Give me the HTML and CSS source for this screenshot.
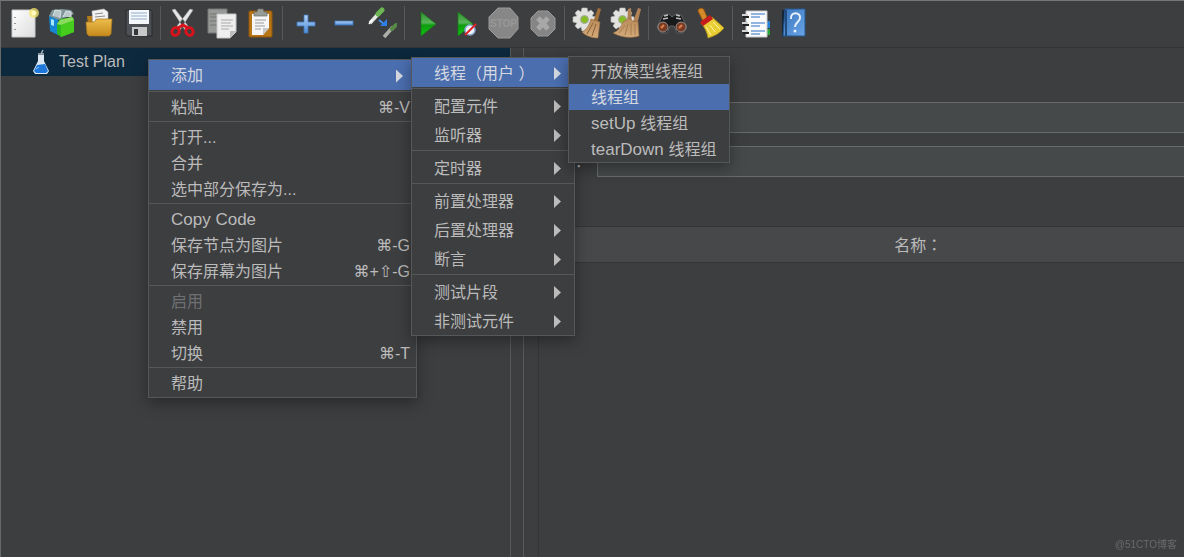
FILE: index.html
```html
<!DOCTYPE html>
<html lang="zh-CN">
<head>
<meta charset="utf-8">
<title>Test Plan</title>
<link rel="stylesheet" href="styles.css">
</head>
<body>
<svg class="defs" aria-hidden="true">
  <defs>
    <linearGradient id="paper" x1="0" y1="0" x2="1" y2="1"><stop offset="0" stop-color="#fff"/><stop offset="1" stop-color="#dcdcdc"/></linearGradient>
    <linearGradient id="gold" x1="0" y1="0" x2="0" y2="1"><stop offset="0" stop-color="#edbd4c"/><stop offset="1" stop-color="#c58a1c"/></linearGradient>
    <linearGradient id="green" x1="0" y1="0" x2="0" y2="1"><stop offset="0" stop-color="#2f8f2f"/><stop offset=".45" stop-color="#58b458"/><stop offset=".55" stop-color="#0d9d0d"/><stop offset="1" stop-color="#12c412"/></linearGradient>
    <linearGradient id="sky" x1="0" y1="0" x2="0" y2="1"><stop offset="0" stop-color="#b5d3f5"/><stop offset="1" stop-color="#4c8bd8"/></linearGradient>
    <linearGradient id="book" x1="0" y1="0" x2="1" y2="1"><stop offset="0" stop-color="#3a76bd"/><stop offset="1" stop-color="#69a4e8"/></linearGradient>
    <linearGradient id="straw" x1="0" y1="0" x2="0" y2="1"><stop offset="0" stop-color="#b98a58"/><stop offset="1" stop-color="#d3ab7c"/></linearGradient>
    <g id="gear">
      <path d="M11 1h5l1 4 3-2 3 3-2 3 4 1v5l-4 1 2 3-3 3-3-2-1 4h-5l-1-4-3 2-3-3 2-3-4-1v-5l4-1-2-3 3-3 3 2z" fill="#e2e2e0" stroke="#b9b9b6" stroke-width=".6"/>
      <circle cx="13.500" cy="12.500" r="4" fill="#86bd25" stroke="#aaa" stroke-width="1"/>
    </g>
  </defs>
</svg>

<div class="window">
  <header class="toolbar" role="toolbar" aria-label="工具栏">
    <button class="tool" aria-label="新建"><svg viewBox="0 0 32 32"><path d="M5 3h21l2 3v24H5z" fill="url(#paper)" stroke="#c9c9c9"/><path d="M8 10v1M8 16v1M8 22v1" stroke="#777" stroke-width="1.500"/><circle cx="27" cy="6" r="5" fill="#f4e76a" opacity=".75"/><circle cx="27" cy="6" r="2.500" fill="#fffbc0"/></svg></button>
    <button class="tool" aria-label="模板"><svg viewBox="0 0 32 32"><path d="M4 9l9 3v16l-8-4z" fill="#1685d4"/><path d="M4 9l3-6 10-1 9 1 3 4-15 6z" fill="#7f9599"/><path d="M8 9l2-6 6 1-1 7M18 10l3-6 5 1v5" fill="#b9c7ca" stroke="#dbe3e4" stroke-width="1"/><path d="M6 12l3 1v6l-3-1z" fill="#a5e8fa"/><path d="M12 17l3-5 13-2 1 3v12l-13 5-4-3z" fill="#2eb820"/><path d="M16 18l13-5v12l-13 5z" fill="#45cc1c"/><path d="M12 17l4 1 13-5-2-3-12 3z" fill="#8bdc5c"/></svg></button>
    <button class="tool" aria-label="打开"><svg viewBox="0 0 32 32"><path d="M4 9h7l2 3h14v14H6z" fill="#b17a1a"/><path d="M9 4l12-2 4 3v13H10z" fill="#f3f3f3" stroke="#bbb" stroke-width=".6"/><path d="M12 7l8-1M12 10l10-1M12 13h10" stroke="#8b8b8b"/><path d="M3 15h8l3-3h15l-1 15-2 2H6l-2-2z" fill="url(#gold)" stroke="#a8751b" stroke-width=".7"/></svg></button>
    <button class="tool" aria-label="保存"><svg viewBox="0 0 32 32"><path d="M5 3h25l1 1v25H7l-2-2z" fill="#4d5155" stroke="#292b2d"/><path d="M8 3h20v14H8z" fill="#f5f8fb"/><path d="M10 6h16M10 9h16M10 12h16" stroke="#91adcb"/><path d="M11 20h15v9H11z" fill="#c9c9c9"/><path d="M13 22h4v6h-4z" fill="#33373a"/></svg></button>
    <span class="tool-sep"></span>
    <button class="tool" aria-label="剪切"><svg viewBox="0 0 32 32"><path d="M5 3l3-1 13 17-3 4zM26 3l-3-1L10 19l3 4z" fill="#e7e7e7" stroke="#9c9c9c" stroke-width=".6"/><g fill="none" stroke="#d8131b" stroke-width="3"><ellipse cx="8.500" cy="24.500" rx="3.500" ry="4" transform="rotate(35 8.500 24.500)"/><ellipse cx="22.500" cy="24.500" rx="3.500" ry="4" transform="rotate(-35 22.500 24.500)"/><path d="M11 21l5-3 5 3"/></g></svg></button>
    <button class="tool" aria-label="复制"><svg viewBox="0 0 32 32"><path d="M3 2h19v24H3z" fill="#979997" stroke="#777"/><path d="M5 7h14M5 10h14M5 14h14M5 18h10" stroke="#747674"/><path d="M12 7h19v18l-6 6H12z" fill="#eee" stroke="#c4c4c4"/><path d="M16 13h12M16 16h10M16 19h12M16 22h8" stroke="#aaa"/><path d="M31 24h-6v7z" fill="#bcbcbc"/></svg></button>
    <button class="tool" aria-label="粘贴"><svg viewBox="0 0 32 32"><rect x="6" y="4" width="23" height="26" rx="1" fill="#b87516" stroke="#91560c"/><path d="M9 7h17v14l-6 7H9z" fill="#f6f6f6"/><path d="M12 13h11M12 16h9M12 19h10M12 22h6" stroke="#9b9b9b"/><path d="M26 21h-6v7z" fill="#c6c6c6"/><path d="M11 9V5h3l1-3h5l1 3h3v4z" fill="#989c97" stroke="#6b706a" stroke-width=".7"/></svg></button>
    <span class="tool-sep"></span>
    <button class="tool" aria-label="展开"><svg viewBox="0 0 32 32"><path d="M15 8h4v7h7v4h-7v7h-4v-7H8v-4h7z" fill="url(#sky)" stroke="#3c79be" stroke-width=".8"/></svg></button>
    <button class="tool" aria-label="折叠"><svg viewBox="0 0 32 32"><rect x="8" y="14" width="18" height="4" fill="url(#sky)" stroke="#3c79be" stroke-width=".8"/></svg></button>
    <button class="tool" aria-label="切换"><svg viewBox="0 0 32 32"><path d="M5 16L15 5" stroke="#e6e8e4" stroke-width="3.500"/><path d="M13 7l4-4" stroke="#6cb653" stroke-width="5" stroke-linecap="round"/><path d="M4 17l3-4" stroke="#fff" stroke-width="1.500"/><path d="M14 13l6 5" stroke="#3f8df0" stroke-width="2"/><path d="M15 19h7v-7z" fill="#2d7ee8"/><path d="M19 30l9-10" stroke="#abafa8" stroke-width="3.500"/><path d="M27 22l4-4" stroke="#568947" stroke-width="4" stroke-linecap="round"/></svg></button>
    <span class="tool-sep"></span>
    <button class="tool" aria-label="启动"><svg viewBox="0 0 32 32"><path d="M10 5l15 12L10 29z" fill="url(#green)" stroke="#138013" stroke-width=".7"/></svg></button>
    <button class="tool" aria-label="不停顿启动"><svg viewBox="0 0 32 32"><path d="M9 5l15 12L9 29z" fill="url(#green)" stroke="#138013" stroke-width=".7"/><circle cx="21" cy="23" r="5" fill="#f0f3f8" stroke="#8ba8d4" stroke-width="1.500"/><path d="M16 28l11-11" stroke="#dd2424" stroke-width="2"/></svg></button>
    <button class="tool" aria-label="停止" disabled><svg viewBox="0 0 32 32"><path d="M11 1h12l8 9v12l-8 9H11l-9-9V10z" fill="#878787" stroke="#9b9b9b"/><text x="16.500" y="20" class="stop-text">STOP</text></svg></button>
    <button class="tool" aria-label="关闭" disabled><svg viewBox="0 0 32 32"><path d="M13 4h10l7 7v11l-7 7H13l-7-7V11z" fill="#858585" stroke="#999"/><path d="M13 11l10 11M23 11L13 22" stroke="#a8a8a8" stroke-width="5"/></svg></button>
    <span class="tool-sep"></span>
    <button class="tool" aria-label="清除"><svg viewBox="0 0 32 32"><use href="#gear"/><path d="M27 1l3 1-4 15-4-2z" fill="#a2703a"/><path d="M20 12l9 3-2 16c-6 0-12-2-16-6 4-2 7-6 9-13z" fill="url(#straw)" stroke="#94673a" stroke-width=".6"/><path d="M22 16l-6 11M25 17l-4 12" stroke="#8c5f33"/></svg></button>
    <button class="tool" aria-label="清除全部"><svg viewBox="0 0 32 32"><use href="#gear"/><path d="M19 2l3-1 1 16-5 1zM29 1l3 1-4 16-5-1z" fill="#b08256"/><path d="M14 15l6-4 5 4 4-1 1 15c-9 3-19 1-26-3 5-2 8-6 10-11z" fill="url(#straw)" stroke="#94673a" stroke-width=".6"/><path d="M16 18l-6 8M19 17l-3 11M22 16v12M26 17v11" stroke="#a67a50"/></svg></button>
    <span class="tool-sep"></span>
    <button class="tool" aria-label="查找"><svg viewBox="0 0 32 32"><path d="M2 20L8 8l6-1 3 3 4-3 5 1 6 12-4 6h-6l-3-7h-4l-3 7H6z" fill="#17191a" stroke="#5f6262"/><path d="M9 9l4-1M21 8l4 1M8 12l5-1M21 11l5 1" stroke="#bbb" stroke-width="1.500"/><circle cx="8" cy="20" r="5" fill="#7b3b22" stroke="#8d8d8d"/><circle cx="26" cy="20" r="5" fill="#7b3b22" stroke="#8d8d8d"/><path d="M6 21l3-3M24 21l3-3" stroke="#db8051" stroke-width="2"/></svg></button>
    <button class="tool" aria-label="重置查找"><svg viewBox="0 0 32 32"><path d="M5 4c0-3 5-4 6-1l3 7-4 4z" fill="#d58a2a" stroke="#955911"/><path d="M8 16l11-6 12 11c-4 5-9 8-16 10-1-6-3-10-7-15z" fill="#e9cf36" stroke="#ae8c13" stroke-width=".7"/><path d="M7 15L17 8l3 4-10 7z" fill="#c61b1d"/><path d="M13 20l5 8M17 18l5 7M20 15l7 7" stroke="#fff29a"/></svg></button>
    <span class="tool-sep"></span>
    <button class="tool" aria-label="函数助手"><svg viewBox="0 0 32 32"><path d="M26 14h5v7h-5z" fill="#2581d5"/><path d="M26 22h5v6h-5z" fill="#2ba339"/><path d="M7 4h21v26H7z" fill="#fafafa" stroke="#c8c8c8"/><path d="M12 7h14M12 10h9M12 16h14M12 19h9M12 24h14M12 27h9" stroke="#2d71c9"/><path d="M4 10h6M4 18h6M4 26h6" stroke="#202224" stroke-width="2"/><path d="M3 8h6M3 16h6M3 24h6" stroke="#d4d4d4" stroke-width="2"/></svg></button>
    <button class="tool" aria-label="帮助"><svg viewBox="0 0 32 32"><path d="M5 4l3-2v26l-3 2z" fill="#14263a"/><path d="M8 2h20v27H6z" fill="url(#book)" stroke="#24568e"/><path d="M9 3v26" stroke="#204b7c" stroke-width="2"/><path d="M14 12c-1-8 10-7 9-1 0 4-5 4-5 9" fill="none" stroke="#e8f1fb" stroke-width="2"/><circle cx="18" cy="24" r="1.500" fill="#e8f1fb"/></svg></button>
  </header>

  <main class="workspace">
    <nav class="tree" aria-label="测试计划树">
      <a class="tree-node" href="#plan"><svg class="flask" viewBox="0 0 20 26"><path d="M7 6h6v6l5 10-2 3H4l-2-3 5-10z" fill="#dce8f2"/><path d="M6 16l8-1 3 7-2 2H5l-2-2z" fill="#1e78da"/><path d="M7 5h6M10 5l2-4" stroke="#a8b2ba" stroke-width="1.500"/><path d="M5 20l3-2" stroke="#8ec7ff"/></svg>Test Plan</a>
    </nav>
    <div class="splitter"></div>
    <section class="editor" id="plan">
      <form class="fields">
        <div class="field"><label for="name">名称<span class="colon" lang="zh-TW">：</span></label><input id="name" type="text"></div>
        <div class="field"><label for="comment">注释<span class="colon" lang="zh-TW">：</span></label><input id="comment" type="text"></div>
      </form>
      <div class="variables">
        <table class="var-table"><thead><tr><th scope="col">名称<span class="colon" lang="zh-TW">：</span></th></tr></thead></table>
      </div>
    </section>
  </main>
</div>

<div class="menu menu-context" role="menu">
  <button class="item item-sub item-first selected" role="menuitem">添加<i class="arrow"></i></button>
  <hr>
  <button class="item" role="menuitem">粘贴<kbd>⌘-V</kbd></button>
  <hr>
  <button class="item" role="menuitem">打开...</button>
  <button class="item" role="menuitem">合并</button>
  <button class="item" role="menuitem">选中部分保存为...</button>
  <hr>
  <button class="item item-latin" role="menuitem">Copy Code</button>
  <button class="item" role="menuitem">保存节点为图片<kbd>⌘-G</kbd></button>
  <button class="item" role="menuitem">保存屏幕为图片<kbd>⌘+⇧-G</kbd></button>
  <hr>
  <button class="item" role="menuitem" disabled>启用</button>
  <button class="item" role="menuitem">禁用</button>
  <button class="item" role="menuitem">切换<kbd>⌘-T</kbd></button>
  <hr>
  <button class="item" role="menuitem">帮助</button>
</div>

<div class="menu menu-add" role="menu">
  <button class="item item-sub selected" role="menuitem">线程（用户 ）<i class="arrow"></i></button>
  <hr>
  <button class="item item-sub" role="menuitem">配置元件<i class="arrow"></i></button>
  <button class="item item-sub" role="menuitem">监听器<i class="arrow"></i></button>
  <hr>
  <button class="item item-sub" role="menuitem">定时器<i class="arrow"></i></button>
  <hr>
  <button class="item item-sub" role="menuitem">前置处理器<i class="arrow"></i></button>
  <button class="item item-sub" role="menuitem">后置处理器<i class="arrow"></i></button>
  <button class="item item-sub" role="menuitem">断言<i class="arrow"></i></button>
  <hr>
  <button class="item item-sub" role="menuitem">测试片段<i class="arrow"></i></button>
  <button class="item item-sub" role="menuitem">非测试元件<i class="arrow"></i></button>
</div>

<div class="menu menu-threads" role="menu">
  <button class="item" role="menuitem">开放模型线程组</button>
  <button class="item selected" role="menuitem">线程组</button>
  <button class="item" role="menuitem"><span><span class="item-latin">setUp </span>线程组</span></button>
  <button class="item" role="menuitem"><span><span class="item-latin">tearDown </span>线程组</span></button>
</div>

<div class="watermark">@51CTO博客</div>
</body>
</html>
```

FILE: styles.css
```css
* { box-sizing: border-box; }

body {
  margin: 0;
  background: #3d3e40;
  color: #bbb;
  font: 16px/20px "Liberation Sans", "Noto Sans CJK SC", "DejaVu Sans", sans-serif;
  overflow: hidden;
}

button, input { font: inherit; color: inherit; }

.defs { position: absolute; width: 0; height: 0; }

.window {
  display: flex;
  flex-direction: column;
  height: 100vh;
  border-top: 1px solid #747778;
  border-left: 1px solid #66696a;
}

/* Toolbar */
.toolbar {
  display: flex;
  align-items: center;
  padding: 5px 3px 7px;
  border-bottom: 1px solid #343537;
}
.tool {
  flex: none;
  width: 38px;
  height: 32px;
  padding: 0 3px;
  border: 0;
  background: none;
}
.tool svg { display: block; width: 32px; height: 32px; }
.tool-sep {
  flex: none;
  width: 8px;
  height: 34px;
  background: linear-gradient(#58595b, #58595b) center / 1px 100% no-repeat;
}
.stop-text {
  font: bold 10px "Liberation Sans", sans-serif;
  fill: #989898;
  text-anchor: middle;
}

/* Tree and editor */
.workspace { display: flex; flex: 1; min-height: 0; }
.tree { flex: 0 0 43%; }
.tree-node {
  display: flex;
  align-items: center;
  gap: 8px;
  height: 28px;
  padding-left: 30px;
  background: #0d293e;
  color: #bbb;
  text-decoration: none;
}
.flask { width: 20px; height: 26px; }
.splitter {
  flex: none;
  width: 14px;
  border: solid #57595b;
  border-width: 0 1px;
}
.editor {
  display: flex;
  flex-direction: column;
  flex: 1;
  min-width: 0;
  overflow: hidden;
  padding: 54px 0 0 14px;
}
.fields { display: grid; gap: 13px; padding-bottom: 49px; }
.field { display: flex; align-items: center; gap: 10px; }
.field label { width: 49px; text-align: right; white-space: nowrap; }
.field input {
  flex: 1;
  min-width: 0;
  height: 31px;
  padding: 0 8px;
  border: 1px solid #686b6c;
  border-right: 0;
  background: #45494a;
}
.colon { font-family: "Noto Sans CJK TC", sans-serif; }
.variables {
  flex: 1;
  border-left: 1px solid #343537;
}
.var-table {
  width: calc(100% + 114px);
  border-collapse: collapse;
}
.var-table th {
  height: 36px;
  padding: 0;
  border: solid #343537;
  border-width: 1px 0;
  background: #47484a;
  font-weight: normal;
}

/* Popup menus */
.menu {
  position: absolute;
  display: flex;
  flex-direction: column;
  border: 1px solid #555759;
  background: #3d3e40;
  box-shadow: 0 5px 14px rgba(0, 0, 0, .35);
}
.menu-context { left: 148px; top: 59px; width: 269px; padding-bottom: 1px; }
.menu-add { left: 411px; top: 57px; width: 164px; }
.menu-threads { left: 568px; top: 56px; width: 162px; padding-top: 1px; }
.item {
  display: flex;
  align-items: center;
  justify-content: space-between;
  height: 26px;
  padding: 2px 6px 0 22px;
  border: 0;
  background: none;
  font-size: 16px;
  line-height: 24px;
  text-align: left;
  white-space: nowrap;
}
.item-sub { height: 29px; padding-right: 13px; }
.item-first { height: 30px; }
.item-latin { font-size: 17px; }
.item:disabled { color: #6f7072; }
.selected { background: #4b6eaf; color: #d4d8e0; }
.menu hr {
  width: 100%;
  height: 1px;
  margin: 1px 0 2px;
  border: 0;
  background: #555759;
}
kbd { font: 16px/24px "Liberation Sans", "DejaVu Sans", sans-serif; }
.arrow {
  width: 7px;
  height: 13px;
  background: currentColor;
  clip-path: polygon(0 0, 100% 50%, 0 100%);
}

.watermark {
  position: fixed;
  right: 7px;
  bottom: 4px;
  color: #696a6c;
  font-size: 10px;
  line-height: 16px;
}
```
